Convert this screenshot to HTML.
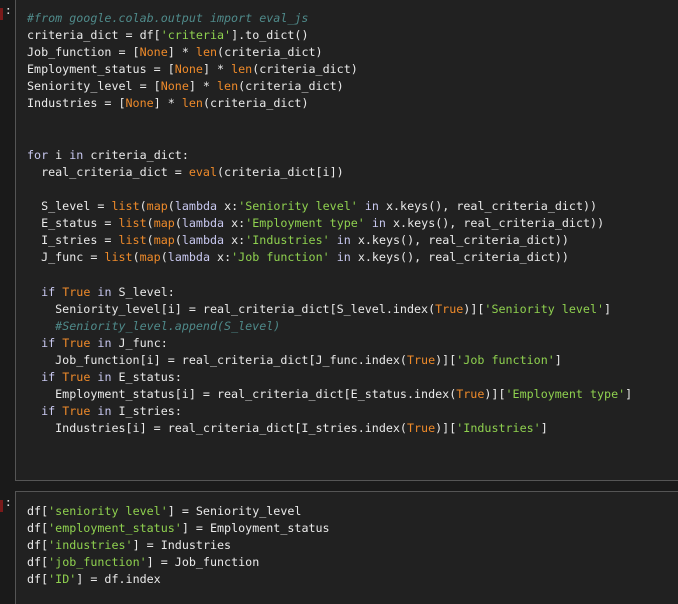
<!DOCTYPE html>
<html><head><style>
html,body{margin:0;padding:0;background:#1a1a1a;width:678px;height:604px;overflow:hidden;position:relative}
.cell{position:absolute;left:15px;right:-5px;background:#212121;border:1px solid #555}
pre{margin:0;position:absolute;left:11px;font-family:"DejaVu Sans Mono","Liberation Mono",monospace;font-size:11.7px;line-height:17.1px;color:#eaeaea}
.c{color:#4f8a8a;font-style:italic}.s{color:#8fd14f}.k{color:#ee8a2a}.p{color:#c8c8f0}
.pr{position:absolute;left:0;width:3px;height:12px;background:#7a1a1a}
.colon{position:absolute;left:5px;color:#ddd;font:bold 11px "Liberation Mono",monospace}
</style></head><body>
<div class="pr" style="top:8px"></div><div class="colon" style="top:6px">:</div>
<div class="cell" style="top:-5px;height:484px">
<pre style="top:14px"><span class="c">#from google.colab.output import eval_js</span>
criteria_dict = df[<span class="s">'criteria'</span>].to_dict()
Job_function = [<span class="k">None</span>] * <span class="k">len</span>(criteria_dict)
Employment_status = [<span class="k">None</span>] * <span class="k">len</span>(criteria_dict)
Seniority_level = [<span class="k">None</span>] * <span class="k">len</span>(criteria_dict)
Industries = [<span class="k">None</span>] * <span class="k">len</span>(criteria_dict)


<span class="p">for</span> i <span class="p">in</span> criteria_dict:
  real_criteria_dict = <span class="k">eval</span>(criteria_dict[i])

  S_level = <span class="k">list</span>(<span class="k">map</span>(<span class="p">lambda</span> x:<span class="s">'Seniority level'</span> <span class="p">in</span> x.keys(), real_criteria_dict))
  E_status = <span class="k">list</span>(<span class="k">map</span>(<span class="p">lambda</span> x:<span class="s">'Employment type'</span> <span class="p">in</span> x.keys(), real_criteria_dict))
  I_stries = <span class="k">list</span>(<span class="k">map</span>(<span class="p">lambda</span> x:<span class="s">'Industries'</span> <span class="p">in</span> x.keys(), real_criteria_dict))
  J_func = <span class="k">list</span>(<span class="k">map</span>(<span class="p">lambda</span> x:<span class="s">'Job function'</span> <span class="p">in</span> x.keys(), real_criteria_dict))

  <span class="p">if</span> <span class="k">True</span> <span class="p">in</span> S_level:
    Seniority_level[i] = real_criteria_dict[S_level.index(<span class="k">True</span>)][<span class="s">'Seniority level'</span>]
    <span class="c">#Seniority_level.append(S_level)</span>
  <span class="p">if</span> <span class="k">True</span> <span class="p">in</span> J_func:
    Job_function[i] = real_criteria_dict[J_func.index(<span class="k">True</span>)][<span class="s">'Job function'</span>]
  <span class="p">if</span> <span class="k">True</span> <span class="p">in</span> E_status:
    Employment_status[i] = real_criteria_dict[E_status.index(<span class="k">True</span>)][<span class="s">'Employment type'</span>]
  <span class="p">if</span> <span class="k">True</span> <span class="p">in</span> I_stries:
    Industries[i] = real_criteria_dict[I_stries.index(<span class="k">True</span>)][<span class="s">'Industries'</span>]</pre>
</div>
<div class="pr" style="top:500px"></div><div class="colon" style="top:498px">:</div>
<div class="cell" style="top:491px;height:130px">
<pre style="top:11px">df[<span class="s">'seniority level'</span>] = Seniority_level
df[<span class="s">'employment_status'</span>] = Employment_status
df[<span class="s">'industries'</span>] = Industries
df[<span class="s">'job_function'</span>] = Job_function
df[<span class="s">'ID'</span>] = df.index</pre>
</div>
</body></html>
